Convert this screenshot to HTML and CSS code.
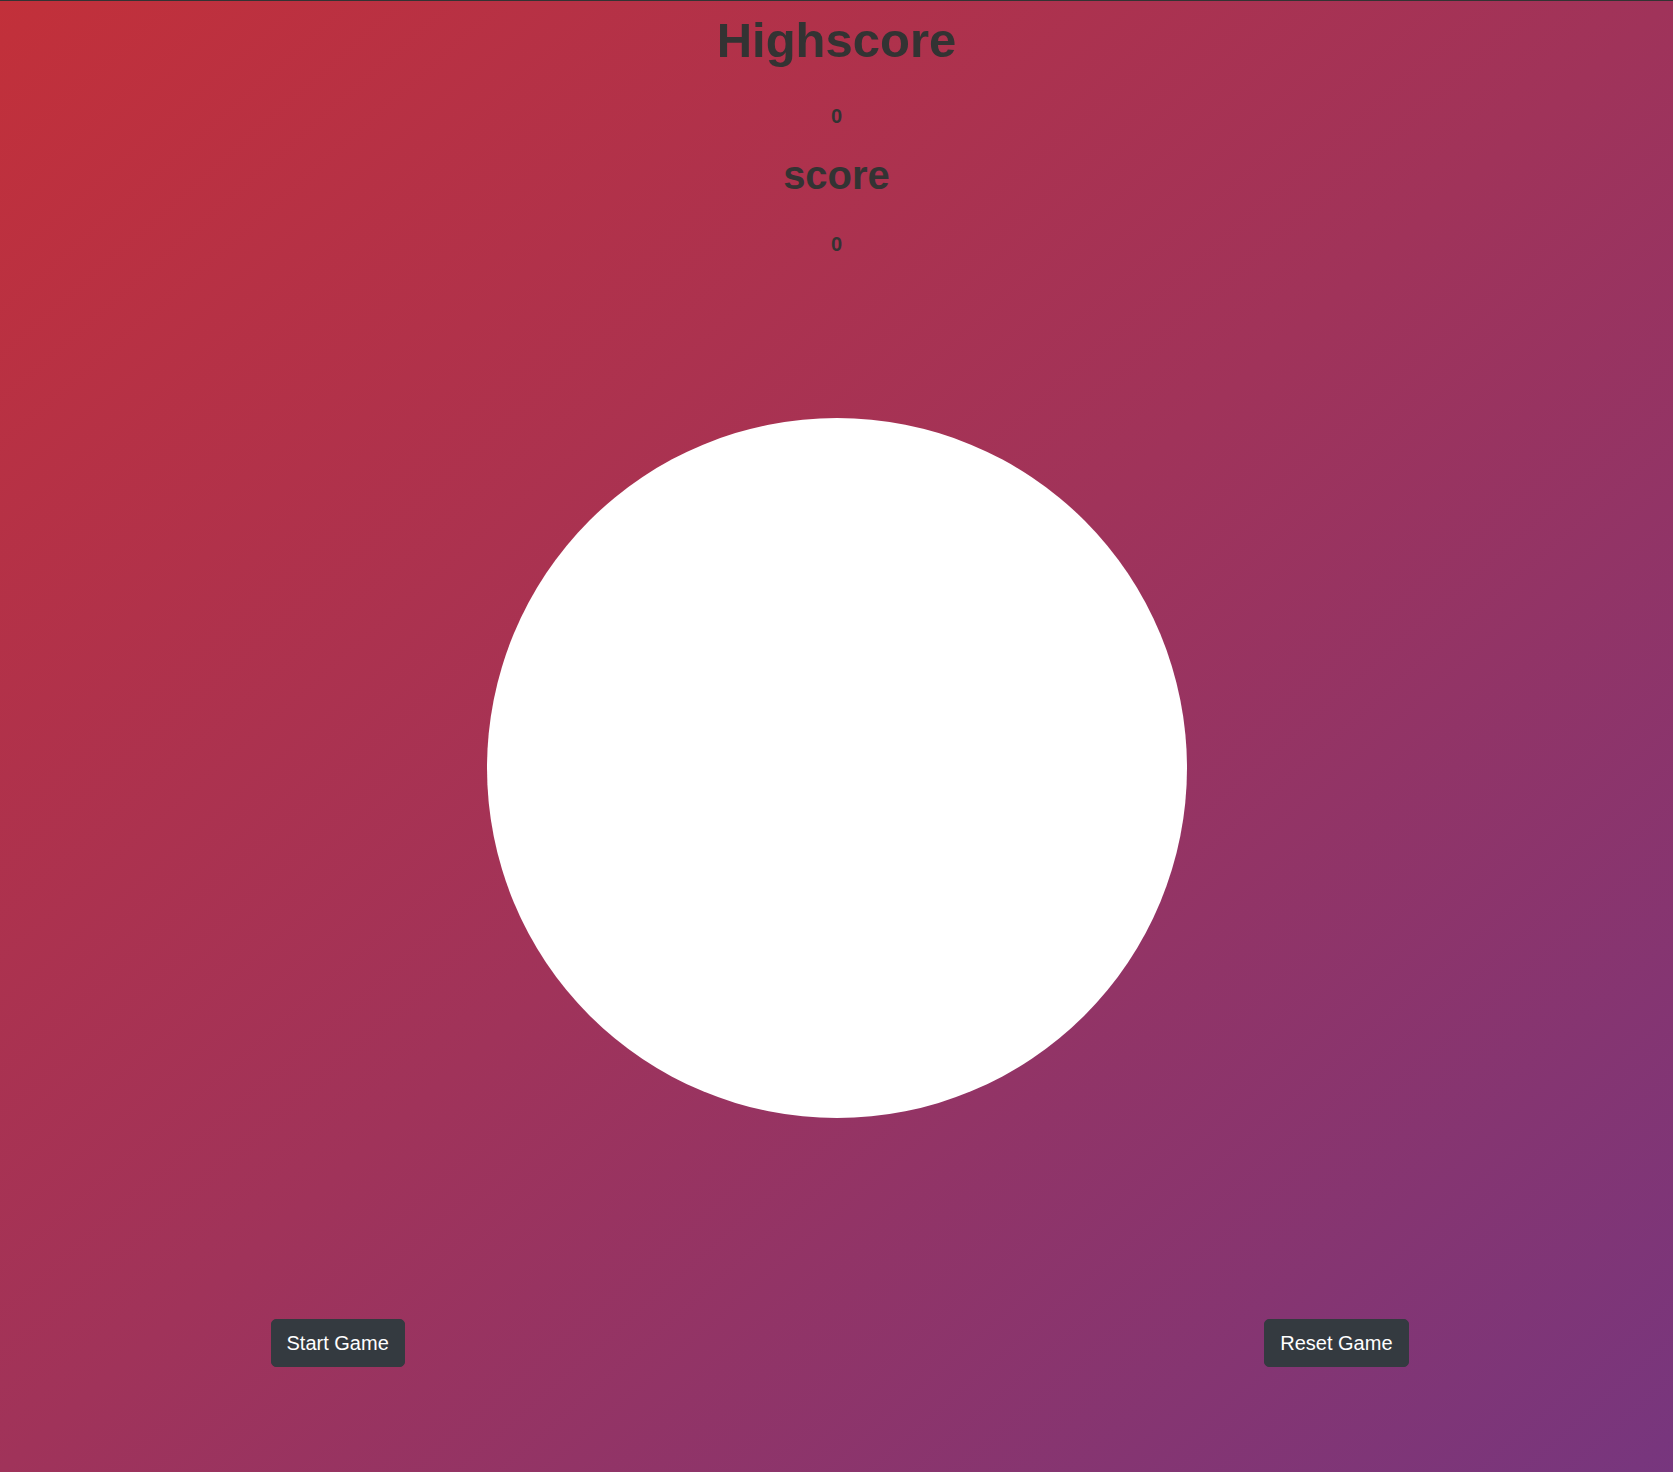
FILE: index.html
```html
<!DOCTYPE html>
<html lang="en">
<head>
<meta charset="utf-8">
<title>Highscore</title>
<link rel="stylesheet" href="styles.css">
</head>
<body>
<main class="page">
  <h1 class="title">Highscore</h1>
  <p class="value value-high">0</p>
  <h2 class="subtitle">score</h2>
  <p class="value value-score">0</p>
  <div class="circle"></div>
  <div class="controls">
    <button class="btn btn-start" type="button">Start Game</button>
    <button class="btn btn-reset" type="button">Reset Game</button>
  </div>
</main>
</body>
</html>
```

FILE: styles.css
```css
html, body {
  margin: 0;
  padding: 0;
}

body {
  min-height: 100vh;
  box-sizing: border-box;
  border-top: 1px solid #333333;
  background: linear-gradient(to bottom right, #c2303a 0%, #a0335a 50%, #77367e 100%);
  font-family: "Liberation Sans", Arial, sans-serif;
  color: #333333;
}

.page {
  display: flex;
  flex-direction: column;
  align-items: center;
}

.title {
  margin: 11px 0 0 0;
  font-size: 49px;
  line-height: 56px;
  font-weight: 700;
}

.value {
  margin: 0;
  font-size: 20px;
  line-height: 24px;
  font-weight: 700;
}

.value-high {
  margin-top: 36px;
}

.subtitle {
  margin: 24px 0 0 0;
  font-size: 40px;
  line-height: 46px;
  font-weight: 700;
}

.value-score {
  margin-top: 34px;
}

.circle {
  margin-top: 162px;
  width: 700px;
  height: 700px;
  border-radius: 50%;
  background: #ffffff;
}

.controls {
  align-self: flex-start;
  margin-left: calc(50% - 566px);
  width: 1138px;
  margin-top: 201px;
  display: flex;
  justify-content: space-between;
}

.btn {
  font-family: "Liberation Sans", Arial, sans-serif;
  font-size: 20px;
  line-height: 30px;
  padding: 8px 15px;
  border: 1px solid #343a40;
  border-radius: 5px;
  background: #343a40;
  color: #ffffff;
  cursor: pointer;
}
```
